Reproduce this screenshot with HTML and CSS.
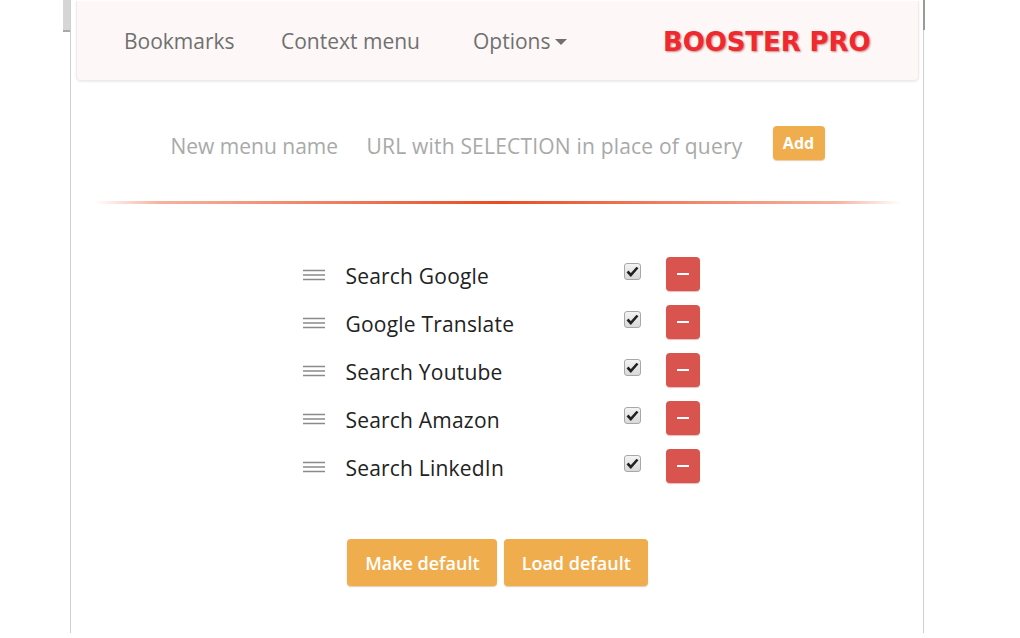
FILE: index.html
```html
<!DOCTYPE html>
<html lang="en">
<head>
<meta charset="utf-8">
<title>Booster Pro - Context menu</title>
<link rel="stylesheet" href="styles.css">
</head>
<body>
<div class="frame">
  <nav class="navbar">
    <a class="nav-link nav-bookmarks" href="#">Bookmarks</a>
    <a class="nav-link nav-context" href="#">Context menu</a>
    <a class="nav-link nav-options dropdown" href="#">Options<span class="caret"></span></a>
    <span class="brand">BOOSTER PRO</span>
  </nav>

  <form class="add-form">
    <input class="field field-name" type="text" placeholder="New menu name">
    <input class="field field-url" type="text" placeholder="URL with SELECTION in place of query">
    <button class="btn btn-warning btn-add" type="button">Add</button>
  </form>

  <hr class="divider">

  <ul class="menu-list">
    <li class="menu-row">
      <svg class="handle" width="22" height="12" viewBox="0 0 22 12"><path d="M0 1.5H22M0 6H22M0 10.5H22" stroke="#8a8a8a" stroke-width="1.5"/></svg>
      <span class="menu-name">Search Google</span>
      <span class="check"><svg width="13" height="11" viewBox="0 0 13 11"><path d="M1.5 5.5L4.8 9L11.5 1.5" fill="none" stroke="#222" stroke-width="2.6"/></svg></span>
      <button class="btn-del" type="button"><span class="minus"></span></button>
    </li>
    <li class="menu-row">
      <svg class="handle" width="22" height="12" viewBox="0 0 22 12"><path d="M0 1.5H22M0 6H22M0 10.5H22" stroke="#8a8a8a" stroke-width="1.5"/></svg>
      <span class="menu-name">Google Translate</span>
      <span class="check"><svg width="13" height="11" viewBox="0 0 13 11"><path d="M1.5 5.5L4.8 9L11.5 1.5" fill="none" stroke="#222" stroke-width="2.6"/></svg></span>
      <button class="btn-del" type="button"><span class="minus"></span></button>
    </li>
    <li class="menu-row">
      <svg class="handle" width="22" height="12" viewBox="0 0 22 12"><path d="M0 1.5H22M0 6H22M0 10.5H22" stroke="#8a8a8a" stroke-width="1.5"/></svg>
      <span class="menu-name">Search Youtube</span>
      <span class="check"><svg width="13" height="11" viewBox="0 0 13 11"><path d="M1.5 5.5L4.8 9L11.5 1.5" fill="none" stroke="#222" stroke-width="2.6"/></svg></span>
      <button class="btn-del" type="button"><span class="minus"></span></button>
    </li>
    <li class="menu-row">
      <svg class="handle" width="22" height="12" viewBox="0 0 22 12"><path d="M0 1.5H22M0 6H22M0 10.5H22" stroke="#8a8a8a" stroke-width="1.5"/></svg>
      <span class="menu-name">Search Amazon</span>
      <span class="check"><svg width="13" height="11" viewBox="0 0 13 11"><path d="M1.5 5.5L4.8 9L11.5 1.5" fill="none" stroke="#222" stroke-width="2.6"/></svg></span>
      <button class="btn-del" type="button"><span class="minus"></span></button>
    </li>
    <li class="menu-row">
      <svg class="handle" width="22" height="12" viewBox="0 0 22 12"><path d="M0 1.5H22M0 6H22M0 10.5H22" stroke="#8a8a8a" stroke-width="1.5"/></svg>
      <span class="menu-name">Search LinkedIn</span>
      <span class="check"><svg width="13" height="11" viewBox="0 0 13 11"><path d="M1.5 5.5L4.8 9L11.5 1.5" fill="none" stroke="#222" stroke-width="2.6"/></svg></span>
      <button class="btn-del" type="button"><span class="minus"></span></button>
    </li>
  </ul>

  <div class="actions">
    <button class="btn btn-warning btn-lg" type="button">Make default</button>
    <button class="btn btn-warning btn-lg" type="button">Load default</button>
  </div>
</div>
</body>
</html>
```

FILE: styles.css
```css
* { box-sizing: border-box; }

html, body {
  margin: 0;
  padding: 0;
  background: #ffffff;
  font-family: "Open Sans", "Noto Sans", sans-serif;
}

.frame {
  position: relative;
  margin-left: 70px;
  width: 854px;
  height: 633px;
  border-left: 1px solid #cfcfcf;
  border-right: 1px solid #cfcfcf;
  padding: 1px 4px 0 5px;
}

.frame::before {
  content: "";
  position: absolute;
  left: -8px;
  top: 0;
  width: 7px;
  height: 30px;
  background: #d6d6d6;
  border-bottom: 2px solid #a9a9a9;
}

.frame::after {
  content: "";
  position: absolute;
  right: -2px;
  top: 0;
  width: 2px;
  height: 30px;
  background: #9a9a9a;
}

.navbar {
  display: flex;
  align-items: center;
  height: 80px;
  padding-left: 47px;
  background: #fdf8f7;
  border: 1px solid #ececec;
  border-top: none;
  border-radius: 0 0 5px 5px;
  box-shadow: 0 1px 2px rgba(0, 0, 0, 0.08);
}

.nav-link {
  color: #707070;
  font-size: 21px;
  text-decoration: none;
}

.nav-bookmarks { width: 157px; }
.nav-context { width: 192px; }
.nav-options { width: 190px; }

.dropdown {
  display: flex;
  align-items: center;
}

.caret {
  display: inline-block;
  margin-left: 4px;
  margin-top: 2px;
  width: 0;
  height: 0;
  border-left: 6px solid transparent;
  border-right: 6px solid transparent;
  border-top: 6px solid #707070;
}

.brand {
  font-family: "DejaVu Sans", Verdana, sans-serif;
  font-weight: bold;
  font-size: 26px;
  color: #f0292e;
  letter-spacing: -0.1px;
  text-shadow: 1px 1px 2px rgba(120, 0, 0, 0.45);
  margin-top: 2px;
}

.add-form {
  display: flex;
  justify-content: center;
  align-items: center;
  gap: 28px;
  margin: 46px 0 0 0;
  height: 36px;
}

.field {
  border: none;
  outline: none;
  background: transparent;
  padding: 0;
  font-family: "Open Sans", "Noto Sans", sans-serif;
  font-size: 21px;
  color: #555555;
  letter-spacing: 0;
  height: 30px;
  margin-top: 2px;
}

.field::placeholder { color: #a9a9a9; }

.field-name { width: 168px; }
.field-url { width: 378px; letter-spacing: 0.2px; }

.btn {
  border: none;
  border-radius: 4px;
  color: #ffffff;
  font-family: "Open Sans", "Noto Sans", sans-serif;
  font-weight: bold;
  cursor: pointer;
}

.btn-warning {
  background: #f0ad4e;
  box-shadow: 0 1px 1px rgba(180, 110, 20, 0.35);
}

.btn-add {
  width: 52px;
  height: 34px;
  font-size: 16px;
  padding: 0;
  margin-bottom: 4px;
}

.divider {
  margin: 38px 18px 0 19px;
  height: 3px;
  border: none;
  background: linear-gradient(to right, rgba(240, 120, 90, 0) 0%, rgba(243, 160, 135, 0.8) 8%, #ea4b22 50%, rgba(243, 160, 135, 0.8) 92%, rgba(240, 120, 90, 0) 100%);
}

.menu-list {
  list-style: none;
  margin: 46px auto 0 auto;
  padding: 0 0 0 7px;
  width: 404px;
}

.menu-row {
  display: flex;
  align-items: center;
  height: 48px;
}

.handle {
  flex: none;
  margin-top: 2px;
  margin-right: 21px;
}

.menu-name {
  flex: 1;
  font-size: 21px;
  color: #222222;
  letter-spacing: 0.2px;
  padding-top: 3px;
}

.check {
  flex: none;
  display: flex;
  align-items: center;
  justify-content: center;
  width: 17px;
  height: 17px;
  margin-bottom: 5px;
  margin-right: 25px;
  border: 1px solid #a8a8a8;
  border-radius: 3px;
  background: linear-gradient(#f4f4f4, #d9d9d9);
}

.btn-del {
  flex: none;
  display: flex;
  align-items: center;
  justify-content: center;
  width: 34px;
  height: 34px;
  padding: 0;
  border: none;
  border-radius: 4px;
  background: #d9534f;
  box-shadow: 0 1px 1px rgba(150, 30, 30, 0.3);
}

.minus {
  display: block;
  width: 12px;
  height: 2px;
  background: #ffffff;
}

.actions {
  display: flex;
  justify-content: center;
  gap: 7px;
  margin-top: 49px;
}

.btn-lg {
  height: 47px;
  padding: 0 17px 0 18px;
  font-size: 18px;
  font-weight: 600;
}
```
